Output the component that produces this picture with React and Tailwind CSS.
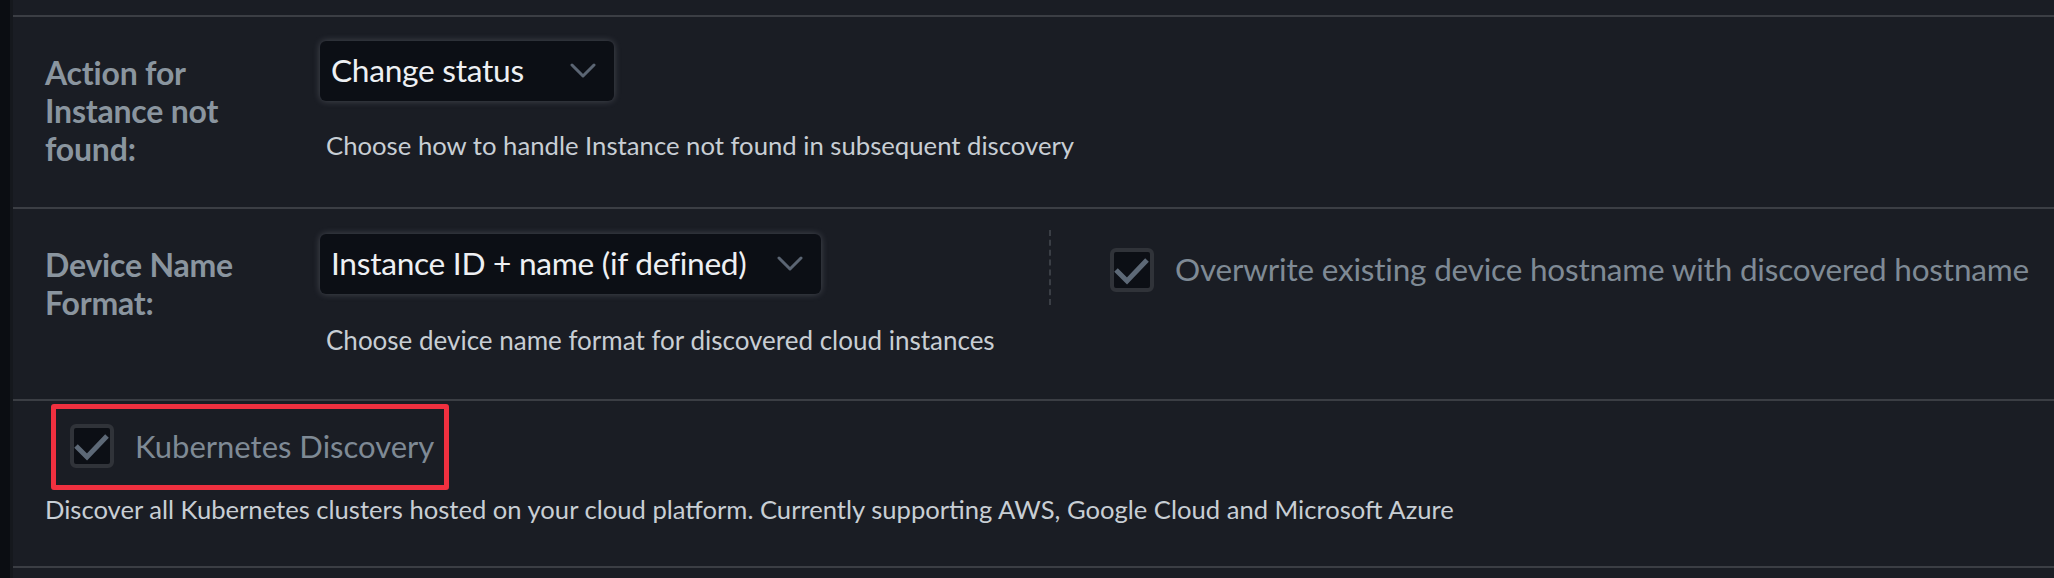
import React from 'react';

function Chevron() {
  return (
    <svg width="26" height="16" viewBox="0 0 26 16" fill="none" className="shrink-0">
      <path d="M2 2 L13 13 L24 2" stroke="#5b6573" strokeWidth="3" strokeLinecap="round" strokeLinejoin="round" />
    </svg>
  );
}

function Checkbox() {
  return (
    <div className="relative w-[44px] h-[44px] shrink-0 rounded-[6px] border-[4px] border-[#303339] bg-[#0c0f15]">
      <svg width="44" height="44" viewBox="0 0 44 44" fill="none" className="absolute -left-[4px] -top-[4px]">
        <path d="M6 22 L17 33 L37 12" stroke="#5d6977" strokeWidth="5" strokeLinejoin="miter" />
      </svg>
    </div>
  );
}

function Select({ value, width }) {
  return (
    <div className={`flex items-center justify-between h-[60px] pl-[11px] pr-[18px] rounded-[6px] bg-[#0c0f15] shadow-[0_0_7px_rgba(190,195,205,0.28)] ${width}`}>
      <span className="text-[31.7px] text-[#eef0f3] tracking-[-0.3px]">{value}</span>
      <Chevron />
    </div>
  );
}

export default function App() {
  return (
    <div className="flex w-[2054px] h-[578px] overflow-hidden bg-[#1a1d24] font-['Lato','Liberation_Sans',sans-serif]">
      {/* barra lateral */}
      <div className="w-[13px] shrink-0 bg-[#0b0d12] border-r-[3px] border-[#15181d]" />

      <div className="flex-1 flex flex-col pt-[15px]">
        {/* Instance not found */}
        <div className="h-[192px] border-t-2 border-[#3b3e44] flex pl-[32px]">
          <div className="w-[275px] shrink-0 pt-[37px] text-[32px] leading-[38px] font-bold tracking-[-0.2px] text-[#8a959f]">
            Action for<br />Instance not<br />found:
          </div>
          <div className="pt-[24px]">
            <Select value="Change status" width="w-[294px]" />
            <p className="mt-[28px] ml-[6px] text-[25.7px] leading-[32px] text-[#c8ced4]">
              Choose how to handle Instance not found in subsequent discovery
            </p>
          </div>
        </div>

        {/* Device name format */}
        <div className="h-[192px] border-t-2 border-[#3b3e44] flex pl-[32px]">
          <div className="w-[275px] shrink-0 pt-[37px] text-[32px] leading-[38px] font-bold tracking-[-0.2px] text-[#8a959f]">
            Device Name<br />Format:
          </div>
          <div className="w-[729px] shrink-0 pt-[25px]">
            <Select value="Instance ID + name (if defined)" width="w-[501px]" />
            <p className="mt-[30px] ml-[6px] text-[26px] leading-[32px] text-[#c8ced4]">
              Choose device name format for discovered cloud instances
            </p>
          </div>
          <div className="mt-[21px] h-[75px] border-l-2 border-dashed border-[#3a3e45]" />
          <label className="flex items-center self-start mt-[37px] ml-[59px] gap-[21px]">
            <Checkbox />
            <span className="text-[31.5px] text-[#7f8a95] tracking-[-0.2px]">
              Overwrite existing device hostname with discovered hostname
            </span>
          </label>
        </div>

        {/* Kubernetes */}
        <div className="h-[169px] border-t-2 border-b-2 border-[#3b3e44] pl-[32px] pt-[3px]">
          <div className="inline-flex items-center ml-[6px] pl-[14px] pt-[14px] pb-[15px] pr-[10px] border-[5px] border-[#f0303f] rounded-[3px] gap-[21px]">
            <Checkbox />
            <span className="text-[31px] text-[#7f8a95]">Kubernetes Discovery</span>
          </div>
          <p className="mt-[3px] text-[25.6px] leading-[32px] text-[#c8ced4]">
            Discover all Kubernetes clusters hosted on your cloud platform. Currently supporting AWS, Google Cloud and Microsoft Azure
          </p>
        </div>
      </div>
    </div>
  );
}
